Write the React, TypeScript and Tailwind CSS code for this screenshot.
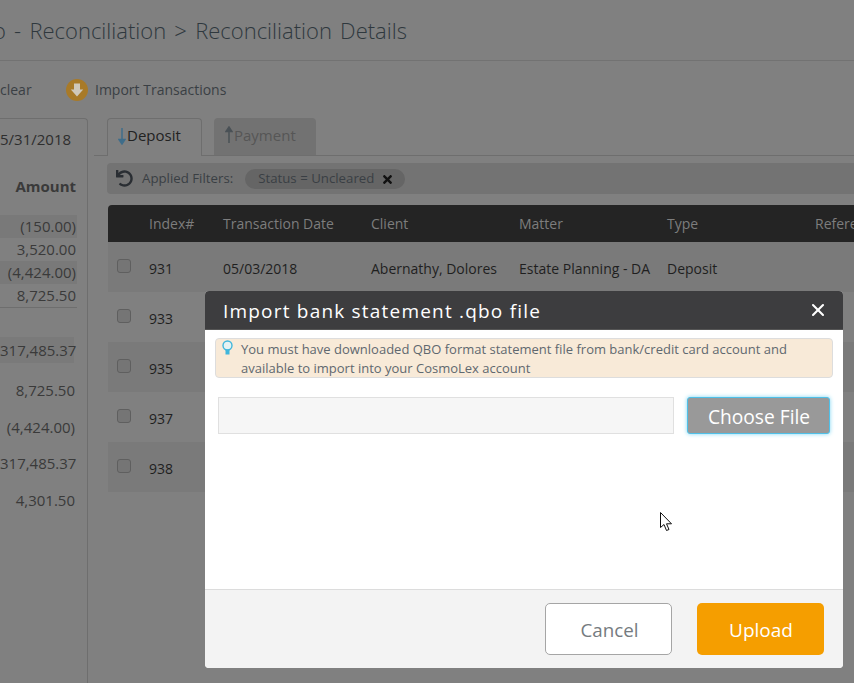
import { X } from "lucide-react";
import { FaTimes, FaUndo } from "react-icons/fa";

const TOTALS = [
  { value: "8,725.50", className: "mt-[15px] h-[24px]" },
  { value: "(4,424.00)", className: "mt-[13px] h-[24px]" },
  { value: "317,485.37", className: "mt-[12px] h-[24px]" },
  { value: "4,301.50", className: "mt-[13px] h-[24px]" },
];

const ROWS = [
  { index: "931", date: "05/03/2018", client: "Abernathy, Dolores", matter: "Estate Planning - DA", type: "Deposit" },
  { index: "933" },
  { index: "935" },
  { index: "937" },
  { index: "938" },
];

function TransactionRow({ row, striped }: { row: (typeof ROWS)[number]; striped: boolean }) {
  return (
    <div className={`flex h-[50px] pt-[17px] text-[14px] leading-[20px] text-[#1f1f1f] ${striped ? "bg-[#7a7a7a]" : ""}`}>
      <div className="w-[41px] shrink-0 pl-[9px]">
        <div className="h-[14px] w-[14px] rounded-[3px] border border-[#5f5f5f] bg-[#757575]" />
      </div>
      <div className="w-[74px] shrink-0">{row.index}</div>
      <div className="w-[148px] shrink-0">{row.date}</div>
      <div className="w-[148px] shrink-0">{row.client}</div>
      <div className="w-[148px] shrink-0">{row.matter}</div>
      <div className="w-[148px] shrink-0">{row.type}</div>
    </div>
  );
}

function Page() {
  return (
    <div className="flex h-full flex-col bg-[#808080]">
      {/* Page title */}
      <div className="h-[61px] shrink-0 border-b border-[#727272]">
        <div className="ml-[-7px] pt-[15px] text-[22px] leading-[30px] font-light whitespace-nowrap text-[#2f383e] [word-spacing:2.500px]">
          o - Reconciliation &gt; Reconciliation Details
        </div>
      </div>

      {/* Toolbar */}
      <div className="flex h-[57px] shrink-0 items-center text-[14px] text-[#3a3f44]">
        <span className="w-[66px]">clear</span>
        <svg width="22" height="22" viewBox="0 0 22 22" className="mr-[7px]">
          <circle cx="11" cy="11" r="11" fill="#a87a28" />
          <path d="M8 4.500h6v6h3.200L11 17.500 4.800 10.500H8z" fill="#cfc8ba" />
        </svg>
        <span>Import Transactions</span>
      </div>

      <div className="flex min-h-0 flex-1">
        {/* Reconciliation summary */}
        <div className="h-full w-[88px] shrink-0 rounded-tr-[4px] border-t border-r border-[#6e6e6e] text-right text-[15px] text-[#3a3a3a]">
          <div className="pt-[10px] pr-[19px] leading-[20px] whitespace-nowrap text-[#2e2e2e]">5/31/2018</div>
          <div className="mt-[27px] pr-[11px] leading-[20px] font-bold">Amount</div>
          <div className="mt-[19px] mr-[10px] border-b border-[#6e6e6e] pr-[1px] leading-[23px] whitespace-nowrap">
            <div className="mr-[-1px] bg-[#797979] pr-[1px]">(150.00)</div>
            <div>3,520.00</div>
            <div className="mr-[-1px] bg-[#797979] pr-[1px]">(4,424.00)</div>
            <div>8,725.50</div>
          </div>
          <div className="mt-[29px] mr-[13px] whitespace-nowrap bg-[#7a7a7a] pr-[2px] leading-[26px]">317,485.37</div>
          {TOTALS.map((total, i) => (
            <div key={i} className={`${total.className} pr-[12px] leading-[24px] whitespace-nowrap`}>
              {total.value}
            </div>
          ))}
        </div>

        {/* Transactions */}
        <div className="ml-[6px] min-w-0 flex-1">
          <div className="flex h-[38px] gap-[12px] border-b border-[#6e6e6e] pl-[13px]">
            <div className="flex h-[38px] w-[95px] items-center rounded-t-[4px] border border-b-0 border-[#6e6e6e] bg-[#808080] pb-[4px] pl-[10px] text-[15px] text-[#222222]">
              <svg width="8" height="18" viewBox="0 0 8 18" className="mr-[1px]">
                <path d="M4 1v15M1 12.500 4 17l3-4.500z" stroke="#3f6d8a" strokeWidth="1.500" fill="#3f6d8a" />
              </svg>
              Deposit
            </div>
            <div className="flex h-[37px] w-[102px] items-center rounded-t-[4px] bg-[#727272] pb-[3px] pl-[11px] text-[15px] text-[#565656]">
              <svg width="8" height="18" viewBox="0 0 8 18" className="mr-[1px]">
                <path d="M4 17V2M1 5.500 4 1l3 4.500z" stroke="#4a5156" strokeWidth="1.500" fill="#4a5156" />
              </svg>
              Payment
            </div>
          </div>

          <div className="mt-[7px] ml-[13px] flex h-[31px] items-center rounded-l-[4px] bg-[#737373] pl-[9px] text-[13.250px] text-[#3a3f44]">
            <FaUndo size={17} className="text-[#2a2e33]" />
            <span className="ml-[9px] pt-[1px]">Applied Filters:</span>
            <span className="ml-[12px] flex h-[20px] w-[160px] items-center rounded-full bg-[#656565] pt-[1px] pl-[13px]">
              Status = Uncleared
              <FaTimes size={13} className="ml-[7px] text-[#111111]" />
            </span>
          </div>

          <div className="mt-[11px] ml-[14px] flex h-[37px] items-center whitespace-nowrap rounded-tl-[4px] bg-[#242424] text-[14px] text-[#7d7d7d]">
            <div className="w-[41px] shrink-0" />
            <div className="w-[74px] shrink-0">Index#</div>
            <div className="w-[148px] shrink-0">Transaction Date</div>
            <div className="w-[148px] shrink-0">Client</div>
            <div className="w-[148px] shrink-0">Matter</div>
            <div className="w-[148px] shrink-0">Type</div>
            <div className="w-[148px] shrink-0">Reference</div>
          </div>

          <div className="ml-[14px] whitespace-nowrap">
            {ROWS.map((row, i) => (
              <TransactionRow key={row.index} row={row} striped={i % 2 === 0} />
            ))}
          </div>
        </div>
      </div>
    </div>
  );
}

function ImportDialog() {
  return (
    <div className="absolute top-[291px] left-[205px] flex h-[377px] w-[638px] flex-col overflow-hidden rounded-[4px] bg-white">
      <div className="flex h-[39px] shrink-0 items-center justify-between border-b border-[#555555] bg-[#3d3d3f] pr-[15px] pl-[18px] text-white">
        <span className="pt-[2px] text-[19px] tracking-[1.200px]">Import bank statement .qbo file</span>
        <X size={20} strokeWidth={2.500} />
      </div>

      <div className="flex-1 px-[10px] pt-[8px]">
        <div className="flex h-[40px] w-[618px] rounded-[4px] border border-[#dddddd] bg-[#f8ead8] pt-[1px] pl-[6px] text-[13px] leading-[18.500px] text-[#5f686f]">
          <svg width="11" height="16" viewBox="0 0 11 16" className="mr-[8px] shrink-0">
            <circle cx="5.500" cy="5.500" r="4.500" fill="#e6f2f2" stroke="#3fb6dc" strokeWidth="1.400" />
            <path d="M3.500 9.500h4v5h-4z" fill="#3fb6dc" />
          </svg>
          <span className="w-[590px]">
            You must have downloaded QBO format statement file from bank/credit card account and available to import
            into your CosmoLex account
          </span>
        </div>
        <div className="mt-[19px] flex gap-[13px] pl-[3px]">
          <div className="h-[37px] w-[456px] border border-[#e0e0e0] bg-[#f6f6f6]" />
          <button
            type="button"
            className="h-[37px] w-[143px] rounded-[3px] border border-[#4fc0e8] bg-[#999999] pt-[2px] pl-[1px] text-[19.200px] leading-[26px] text-white shadow-[0_0_4px_#7fd6f2]"
          >
            Choose File
          </button>
        </div>
      </div>

      <div className="flex h-[79px] shrink-0 gap-[25px] border-t border-[#dcdcdc] bg-[#f3f3f3] pt-[13px] pl-[340px]">
        <button
          type="button"
          className="h-[52px] w-[127px] rounded-[5px] border border-[#a5a5a5] bg-white pt-[2px] pl-[2px] text-[18.800px] text-[#757b80]"
        >
          Cancel
        </button>
        <button
          type="button"
          className="h-[52px] w-[127px] rounded-[5px] bg-[#f59e00] pt-[2px] pl-[1px] text-[19px] text-white"
        >
          Upload
        </button>
      </div>
    </div>
  );
}

export default function App() {
  return (
    <div className="relative h-[683px] w-[854px] overflow-hidden font-['Open_Sans',sans-serif]">
      <Page />
      <ImportDialog />
      {/* mouse pointer */}
      <svg width="13" height="20" viewBox="0 0 13 20" className="absolute top-[512px] left-[660px]">
        <path
          d="M0.500 0.500V15.500L4 12.500 6.500 18.500 9 17.500 6.500 11.800H11.500z"
          fill="#ffffff"
          stroke="#111111"
          strokeWidth="1"
        />
      </svg>
    </div>
  );
}
